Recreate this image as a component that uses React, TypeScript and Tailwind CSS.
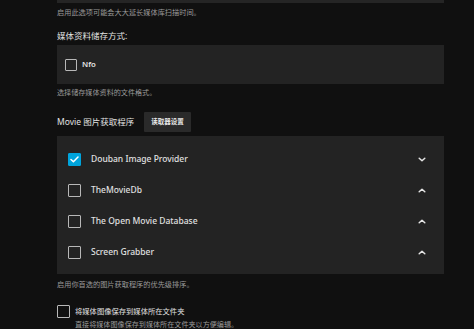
import { useState } from 'react'

const font = { fontFamily: '"Noto Sans", "Noto Sans CJK SC", sans-serif' }

const providers = [
  { name: 'Douban Image Provider', enabled: true, open: true },
  { name: 'TheMovieDb', enabled: false, open: false },
  { name: 'The Open Movie Database', enabled: false, open: false },
  { name: 'Screen Grabber', enabled: false, open: false },
]

function Chevron({ down }: { down: boolean }) {
  return (
    <svg width="8" height="5" viewBox="0 0 8 5" className="text-[#e5e5e5]">
      <path
        d={down ? 'M1.2 1.2 L4 3.8 L6.8 1.2' : 'M1.2 3.8 L4 1.2 L6.8 3.8'}
        fill="none"
        stroke="currentColor"
        strokeWidth="1.5"
        strokeLinecap="round"
        strokeLinejoin="round"
      />
    </svg>
  )
}

function Box({ checked, size = 12 }: { checked: boolean; size?: number }) {
  return (
    <span
      className={`flex shrink-0 items-center justify-center rounded-[1px] border-[1.5px] ${
        checked ? 'border-[#00a4dc] bg-[#00a4dc]' : 'border-[#b8b8b8] bg-transparent'
      }`}
      style={{ width: size, height: size }}
    >
      {checked && (
        <svg width="9" height="7" viewBox="0 0 9 7">
          <path d="M1 3.5 L3.4 5.8 L8 1" fill="none" stroke="white" strokeWidth="1.5" strokeLinecap="round" strokeLinejoin="round" />
        </svg>
      )}
    </span>
  )
}

export default function App() {
  const [items, setItems] = useState(providers)
  const [saveLocal, setSaveLocal] = useState(false)
  const [nfo, setNfo] = useState(false)

  return (
    <div className="min-h-[329px] w-[474px] overflow-hidden bg-[#101010]" style={font}>
      <div className="ml-[57px] w-[387px]">
        <div className="h-[3px] bg-[#252525]" />
        <p className="mt-[3px] text-[7.2px] leading-[12px] text-[#9a9a9a]">启用此选项可能会大大延长媒体库扫描时间。</p>

        <p className="mt-[12px] text-[8.5px] leading-[12px] text-[#e2e2e2]">媒体资料储存方式:</p>
        <div className="mt-[3px] flex h-[39px] items-center gap-[5px] bg-[#232323] px-[8px]">
          <button type="button" onClick={() => setNfo(!nfo)}>
            <Box checked={nfo} />
          </button>
          <span className="text-[7.8px] font-semibold text-[#e2e2e2]">Nfo</span>
        </div>
        <p className="mt-[2px] text-[7.1px] leading-[12px] text-[#9a9a9a]">选择储存媒体资料的文件格式。</p>

        <div className="mt-[14px] flex h-[20px] items-center gap-[10px]">
          <span className="text-[8.5px] text-[#e2e2e2]">Movie 图片获取程序</span>
          <button type="button" className="flex h-[20px] items-center rounded-[1px] bg-[#2a2a2a] px-[7px] text-[6.5px] font-bold text-[#e8e8e8]">
            读取器设置
          </button>
        </div>

        <div className="mt-[4px] bg-[#232323] pb-[6px] pt-[8px]">
          {items.map((item, i) => (
            <div key={item.name} className="flex h-[31px] items-center pl-[11px] pr-[18px]">
              <button
                type="button"
                onClick={() => setItems(items.map((p, j) => (j === i ? { ...p, enabled: !p.enabled } : p)))}
              >
                <Box checked={item.enabled} size={13} />
              </button>
              <span className="ml-[10px] flex-1 text-[8.5px] font-medium text-[#e0e0e0]">{item.name}</span>
              <Chevron down={item.open} />
            </div>
          ))}
        </div>
        <p className="mt-[4px] text-[7.2px] leading-[12px] text-[#9a9a9a]">启用你首选的图片获取程序的优先级排序。</p>

        <div className="mt-[15px] flex h-[12px] items-center gap-[5px]">
          <button type="button" onClick={() => setSaveLocal(!saveLocal)}>
            <Box checked={saveLocal} size={13} />
          </button>
          <span className="text-[7.3px] text-[#e2e2e2]">将媒体图像保存到媒体所在文件夹</span>
        </div>
        <p className="ml-[18px] mt-[1px] text-[7.1px] leading-[12px] text-[#9a9a9a]">直接将媒体图像保存到媒体所在文件夹以方便编辑。</p>
      </div>
    </div>
  )
}
